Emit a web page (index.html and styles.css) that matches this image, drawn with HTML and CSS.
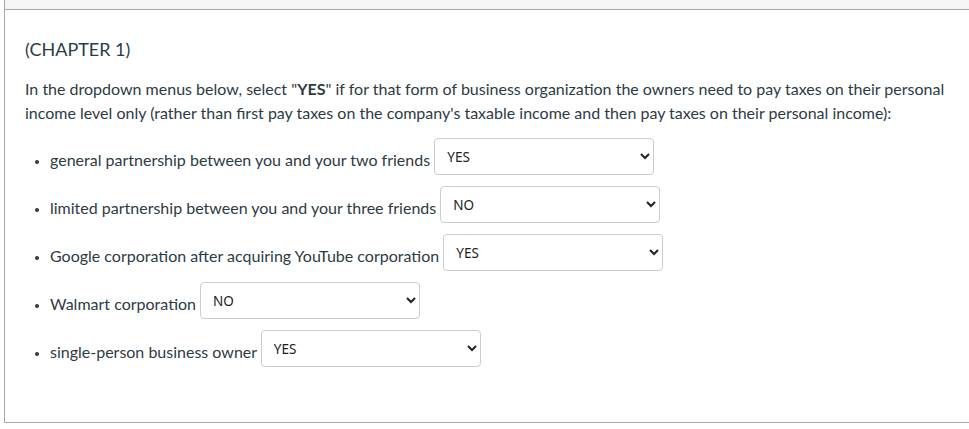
FILE: index.html
```html
<!DOCTYPE html>
<html lang="en">
<head>
  <meta charset="UTF-8" />
  <meta name="viewport" content="width=device-width, initial-scale=1.0"/>
  <title>Chapter 1 Quiz</title>
  <link rel="stylesheet" href="styles.css">
</head>
<body>
  <div class="question">
    <div class="question-header"></div>
    <div class="question-text">
      <p class="chapter">(CHAPTER 1)</p>
      <p class="prompt">In the dropdown menus below, select "<strong>YES</strong>" if for that form of business organization the owners need to pay taxes on their personal income level only (rather than first pay taxes on the company's taxable income and then pay taxes on their personal income):</p>
      <ul class="answers">
        <li>general partnership between you and your two friends
          <select class="answer-select">
            <option>[ Select ]</option>
            <option selected>YES</option>
            <option>NO</option>
          </select>
        </li>
        <li>limited partnership between you and your three friends
          <select class="answer-select">
            <option>[ Select ]</option>
            <option>YES</option>
            <option selected>NO</option>
          </select>
        </li>
        <li>Google corporation after acquiring YouTube corporation
          <select class="answer-select">
            <option>[ Select ]</option>
            <option selected>YES</option>
            <option>NO</option>
          </select>
        </li>
        <li>Walmart corporation
          <select class="answer-select">
            <option>[ Select ]</option>
            <option>YES</option>
            <option selected>NO</option>
          </select>
        </li>
        <li>single-person business owner
          <select class="answer-select">
            <option>[ Select ]</option>
            <option selected>YES</option>
            <option>NO</option>
          </select>
        </li>
      </ul>
    </div>
  </div>
</body>
</html>
```

FILE: styles.css
```css
body {
  margin: 0;
  background-color: #ffffff;
  font-family: 'Lato', 'Liberation Sans', sans-serif;
  color: #2d3b45;
}

.question {
  margin-left: 4px;
  border-left: 1px solid #a8a8a8;
  border-bottom: 1px solid #a8a8a8;
}

.question-header {
  height: 9px;
  background-color: #f5f5f5;
  border-bottom: 1px solid #a8a8a8;
}

.question-text {
  padding: 26px 20px 55px 20px;
}

.chapter {
  margin: 0 0 14px 0;
  font-size: 18px;
  line-height: 27px;
}

.prompt {
  margin: 0 0 13px 0;
  font-size: 16px;
  line-height: 24px;
}

.answers {
  margin: 0;
  padding-left: 25px;
  font-size: 16px;
}

.answers li {
  margin-bottom: 11px;
}

.answers li::marker {
  font-size: 13px;
}

.answers li:last-child {
  margin-bottom: 0;
}

.answer-select {
  width: 220px;
  height: 37px;
  padding: 0 8px;
  border: 1px solid #cccccc;
  border-radius: 4px;
  background-color: #ffffff;
  color: #222222;
  font-family: 'Noto Sans', 'Open Sans', sans-serif;
  font-size: 13.5px;
  vertical-align: 4px;
}
```
